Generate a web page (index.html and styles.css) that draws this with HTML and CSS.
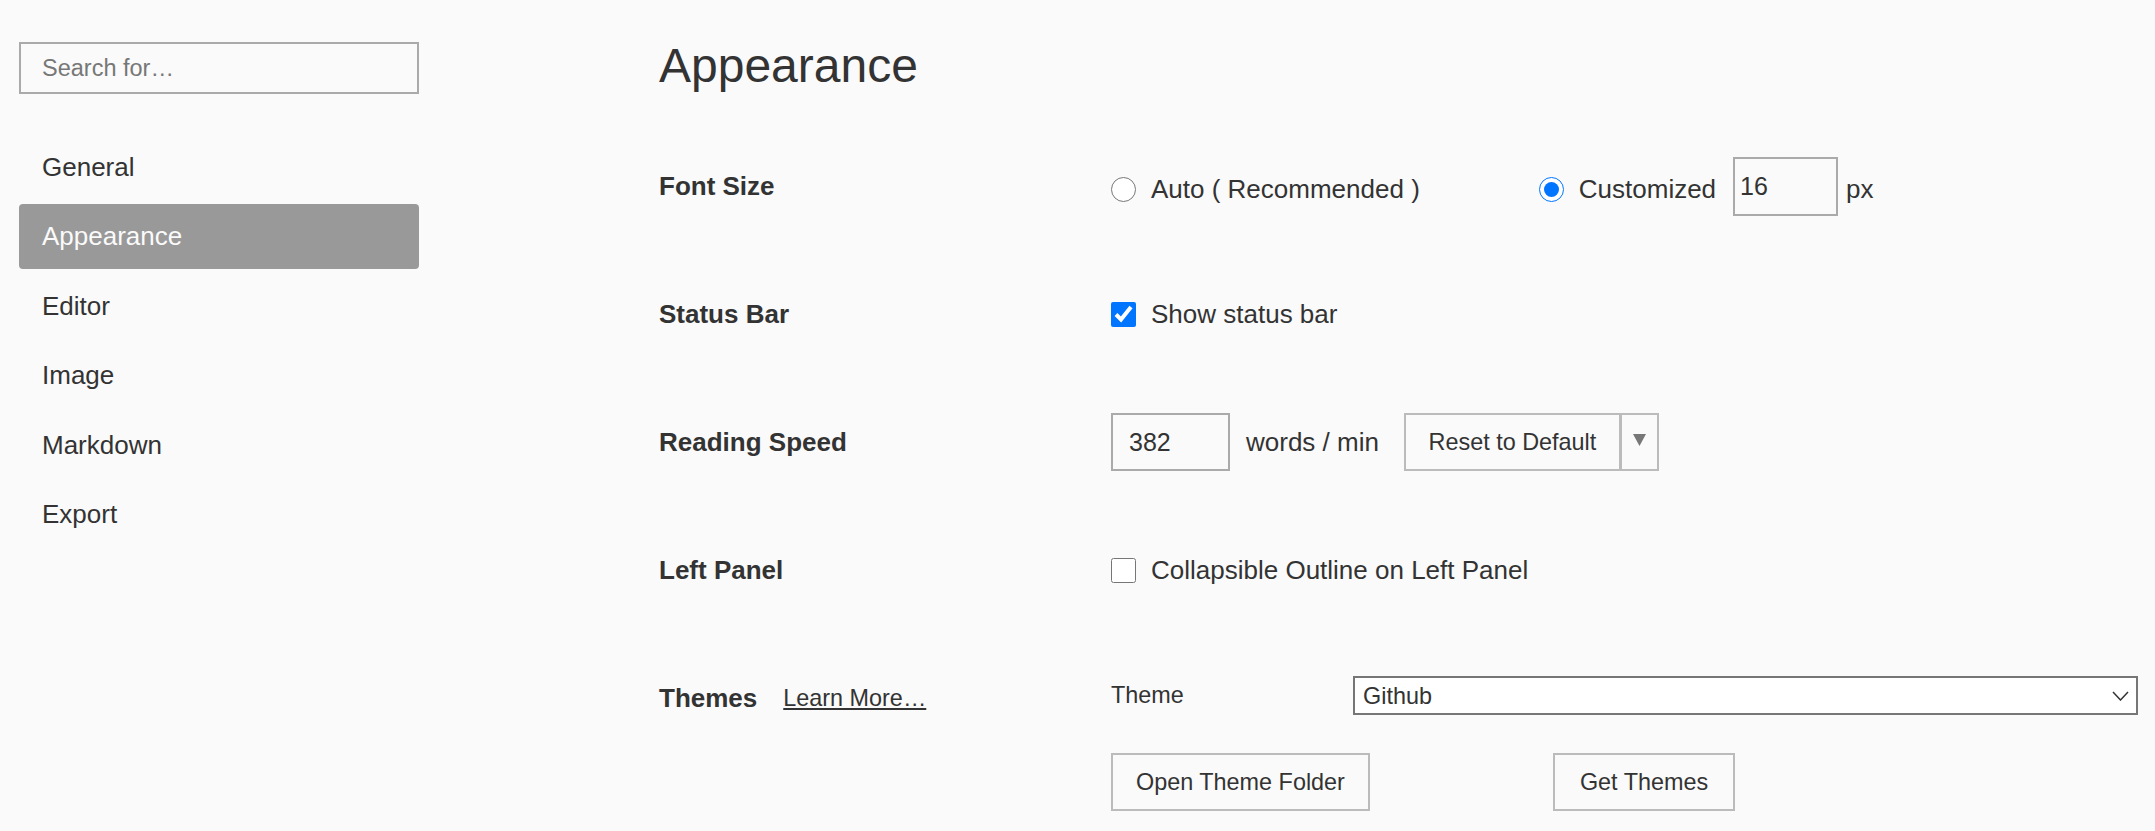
FILE: index.html
```html
<!DOCTYPE html>
<html>

<head>
    <title>Preferences</title>
    <meta name="viewport" content="width=device-width, initial-scale=1">
    <link rel="stylesheet" href="styles.css">
</head>

<body>
    <div class="prefs">
        <aside class="sidebar">
            <input class="search" type="text" placeholder="Search for…">
            <ul class="nav">
                <li>General</li>
                <li class="active">Appearance</li>
                <li>Editor</li>
                <li>Image</li>
                <li>Markdown</li>
                <li>Export</li>
            </ul>
        </aside>

        <main class="panel">
            <h1>Appearance</h1>

            <div class="row">
                <div class="label">Font Size</div>
                <div class="control">
                    <label class="option radioOpt autoOpt"><input type="radio" name="fontsize"> <span>Auto ( Recommended )</span></label>
                    <label class="option radioOpt"><input type="radio" name="fontsize" checked> <span>Customized</span></label>
                    <input class="numInput sizeInput" type="text" value="16">
                    <span class="unit">px</span>
                </div>
            </div>

            <div class="row">
                <div class="label">Status Bar</div>
                <div class="control">
                    <label class="option"><input type="checkbox" checked> <span>Show status bar</span></label>
                </div>
            </div>

            <div class="row">
                <div class="label">Reading Speed</div>
                <div class="control">
                    <input class="numInput speedInput" type="text" value="382">
                    <span class="wordsMin">words / min</span>
                    <div class="splitBtn">
                        <button class="btn resetBtn">Reset to Default</button>
                        <button class="btn caretBtn" title="More">
                            <svg width="13" height="12" viewBox="0 0 13 12"><polygon points="0,0 13,0 6.5,12" fill="#777" /></svg>
                        </button>
                    </div>
                </div>
            </div>

            <div class="row">
                <div class="label">Left Panel</div>
                <div class="control">
                    <label class="option"><input type="checkbox"> <span>Collapsible Outline on Left Panel</span></label>
                </div>
            </div>

            <div class="themeRow">
                <div class="themeHead">
                    <span class="label">Themes</span>
                    <a href="#" class="learnMore">Learn More…</a>
                </div>
                <div class="themeControls">
                    <div class="themeLine">
                        <span class="themeLabel">Theme</span>
                        <div class="selectWrap">
                            <select class="themeSelect">
                                <option>Github</option>
                                <option>Newsprint</option>
                                <option>Night</option>
                                <option>Pixyll</option>
                                <option>Whitey</option>
                            </select>
                            <svg class="chevron" width="17" height="10" viewBox="0 0 17 10"><polyline points="1,1 8.5,9 16,1" fill="none" stroke="#333" stroke-width="1.5" /></svg>
                        </div>
                    </div>
                    <div class="themeButtons">
                        <button class="btn themeBtn">Open Theme Folder</button>
                        <button class="btn themeBtn getThemes">Get Themes</button>
                    </div>
                </div>
            </div>
        </main>
    </div>
</body>

</html>
```

FILE: styles.css
```css
* {
    box-sizing: border-box
}

body {
    margin: 0;
    background: #fafafa;
    color: #333;
    font-family: "Liberation Sans", Arial, sans-serif;
    font-size: 26px;
}

.prefs {
    display: flex;
}

/* left column */
.sidebar {
    flex-shrink: 0;
    width: 419px;
    padding: 42px 0 0 19px;
}

.search {
    display: block;
    width: 400px;
    height: 52px;
    border: 2px solid #aaa;
    background: #fafafa;
    padding: 0 21px;
    font-family: inherit;
    font-size: 23.5px;
    color: #333;
    outline: none;
}

.search::placeholder {
    color: #777;
}

.nav {
    list-style: none;
    margin: 41px 0 0;
    padding: 0;
    width: 400px;
}

.nav li {
    height: 65px;
    line-height: 65px;
    padding-left: 23px;
    margin-bottom: 4.4px;
    border-radius: 4px;
    font-size: 26px;
}

.nav li.active {
    background: #999;
    color: #fafafa;
}

/* right column */
.panel {
    flex: 1;
    padding: 38px 17px 0 240px;
}

h1 {
    margin: 0 0 28px;
    font-size: 48px;
    line-height: 56px;
    font-weight: normal;
}

.row {
    display: grid;
    grid-template-columns: 452px 1fr;
    align-items: center;
    height: 128px;
}

.label {
    font-weight: bold;
    font-size: 26px;
}

.control {
    display: flex;
    align-items: center;
}

.option {
    display: flex;
    align-items: center;
}

.option input {
    width: 25px;
    height: 25px;
    margin: 0 15px 0 0;
}

.radioOpt {
    margin-top: 7px;
}

.autoOpt {
    margin-right: 119px;
}

.numInput {
    border: 2px solid #aaa;
    background: #fafafa;
    font-family: inherit;
    font-size: 25px;
    color: #333;
    outline: none;
}

.sizeInput {
    width: 105px;
    height: 59px;
    padding: 0 5px;
    margin-left: 17px;
}

.unit {
    margin-left: 8px;
    margin-top: 7px;
}

.speedInput {
    width: 119px;
    height: 58px;
    padding: 0 16px;
}

.wordsMin {
    margin-left: 16px;
}

.btn {
    height: 58px;
    border: 2px solid #bbb;
    background: #fafafa;
    color: #333;
    font-family: inherit;
    font-size: 23.4px;
    cursor: pointer;
}

.splitBtn {
    display: flex;
    margin-left: 25px;
}

.resetBtn {
    width: 217px;
    padding: 0;
}

.caretBtn {
    display: flex;
    align-items: center;
    justify-content: center;
    width: 38px;
    padding: 0 0 4px;
    border-left-width: 1px;
}

.themeRow {
    display: grid;
    grid-template-columns: 452px 1fr;
    padding-top: 42px;
}

.themeHead {
    display: flex;
    align-items: center;
    height: 39px;
    padding-top: 5px;
}

.learnMore {
    margin-left: 26px;
    font-size: 23.4px;
    color: #333;
}

.themeLine {
    display: grid;
    grid-template-columns: 242px 1fr;
    align-items: center;
}

.themeLabel {
    font-size: 23.4px;
}

.selectWrap {
    position: relative;
}

.themeSelect {
    display: block;
    appearance: none;
    -webkit-appearance: none;
    height: 39px;
    width: 100%;
    border: 2px solid #767676;
    border-radius: 0;
    background: #fff;
    color: #333;
    padding: 0 8px;
    font-family: inherit;
    font-size: 23.4px;
    outline: none;
}

.chevron {
    position: absolute;
    right: 9px;
    top: 15px;
    pointer-events: none;
}

.themeButtons {
    display: flex;
    margin-top: 38px;
}

.themeBtn {
    padding: 0 23px;
}

.getThemes {
    margin-left: 183px;
    padding: 0 25px;
}
```
